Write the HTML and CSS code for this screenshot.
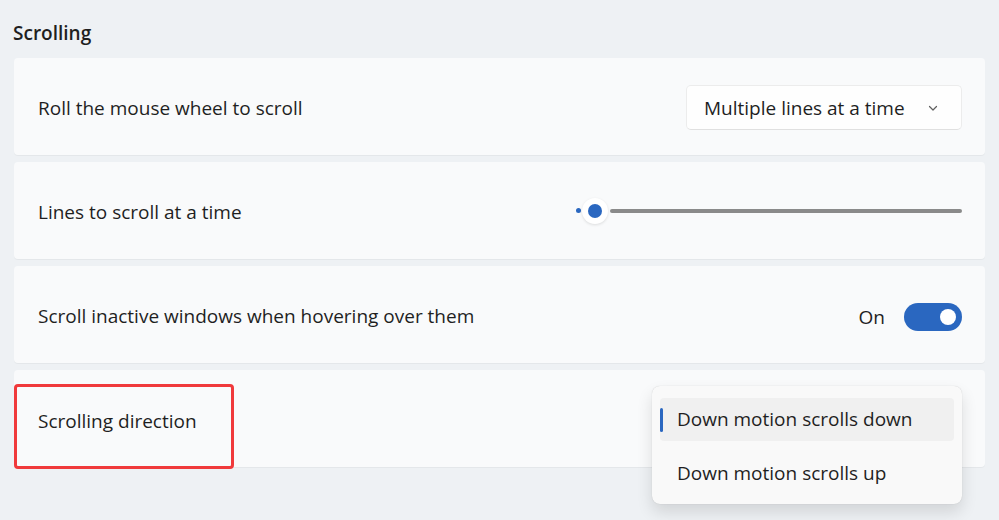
FILE: index.html
```html
<!DOCTYPE html>
<html lang="en">
<head>
  <meta charset="UTF-8" />
  <title>Mouse settings - Scrolling</title>
  <link rel="stylesheet" href="styles.css">
</head>
<body>

  <div class="page">
    <h2 class="section-title">Scrolling</h2>

    <!-- Roll the mouse wheel -->
    <div class="card">
      <span class="label">Roll the mouse wheel to scroll</span>
      <div class="combo">
        <span>Multiple lines at a time</span>
        <svg class="chevron" width="12" height="12" viewBox="0 0 12 12">
          <path d="M2.5 4.5 L6 8 L9.5 4.5" fill="none" stroke="#5f5f5f" stroke-width="1.2" stroke-linecap="round" stroke-linejoin="round"/>
        </svg>
      </div>
    </div>

    <!-- Lines to scroll -->
    <div class="card">
      <span class="label">Lines to scroll at a time</span>
      <div class="slider">
        <span class="slider-fill"></span>
        <span class="slider-thumb"><span class="slider-dot"></span></span>
        <span class="slider-track"></span>
      </div>
    </div>

    <!-- Inactive windows -->
    <div class="card">
      <span class="label">Scroll inactive windows when hovering over them</span>
      <div class="toggle-wrap">
        <span class="toggle-text">On</span>
        <span class="toggle"><span class="knob"></span></span>
      </div>
    </div>

    <!-- Scrolling direction -->
    <div class="card card-last">
      <span class="label">Scrolling direction</span>
      <div class="highlight"></div>
      <div class="menu">
        <div class="menu-item selected">Down motion scrolls down</div>
        <div class="menu-item">Down motion scrolls up</div>
      </div>
    </div>
  </div>

</body>
</html>
```

FILE: styles.css
```css
:root {
  --accent: #2a67c0;
  --page-bg: #eef1f4;
  --card-bg: #f9fafb;
  --text: #1f1f1f;
}

html, body {
  height: 100%;
}

body {
  margin: 0;
  padding: 0;
  min-height: 520px;
  background-color: var(--page-bg);
  font-family: 'Open Sans', 'Noto Sans', sans-serif;
  color: var(--text);
}

.page {
  padding: 19px 14px 60px 14px;
  width: 971px;
}

.section-title {
  margin: 0 0 11px -1px;
  font-size: 19px;
  font-weight: 600;
  line-height: 28px;
}

.card {
  position: relative;
  display: flex;
  align-items: center;
  justify-content: space-between;
  height: 97px;
  box-sizing: border-box;
  padding: 2px 23px 0 24px;
  margin-bottom: 7px;
  background-color: var(--card-bg);
  border-radius: 4px;
  box-shadow: 0 1px 0 rgba(0, 0, 0, 0.04);
}

.card-last {
  margin-top: 1px;
  padding-top: 5px;
}

.label {
  font-size: 19px;
}

/* dropdown button */
.combo {
  display: flex;
  align-items: center;
  justify-content: space-between;
  width: 276px;
  height: 45px;
  box-sizing: border-box;
  padding: 0 22px 0 17px;
  background: #fefefe;
  border: 1px solid #ececec;
  border-bottom-color: #e0e0e0;
  border-radius: 5px;
  font-size: 19px;
}

/* slider */
.slider {
  position: relative;
  display: flex;
  align-items: center;
  width: 388px;
  height: 30px;
  margin-top: -2px;
}

.slider-fill {
  width: 5px;
  height: 5px;
  margin-left: 2px;
  border-radius: 3px;
  background: var(--accent);
}

.slider-thumb {
  display: flex;
  align-items: center;
  justify-content: center;
  width: 26px;
  height: 26px;
  margin-left: 1px;
  border-radius: 50%;
  background: #ffffff;
  box-shadow: 0 1px 3px rgba(0, 0, 0, 0.12);
}

.slider-dot {
  width: 14px;
  height: 14px;
  border-radius: 50%;
  background: var(--accent);
}

.slider-track {
  flex: 1;
  height: 4px;
  margin-left: 2px;
  border-radius: 2px;
  background: #8a8a8a;
}

/* toggle */
.toggle-wrap {
  display: flex;
  align-items: center;
  gap: 19px;
  margin-top: 2px;
}

.toggle-text {
  font-size: 19px;
}

.toggle {
  display: flex;
  align-items: center;
  justify-content: flex-end;
  width: 58px;
  height: 28px;
  box-sizing: border-box;
  padding-right: 6px;
  border-radius: 14px;
  background: var(--accent);
}

.knob {
  width: 16px;
  height: 16px;
  border-radius: 50%;
  background: #ffffff;
}

/* red annotation box */
.highlight {
  position: absolute;
  left: 0;
  top: 14px;
  width: 220px;
  height: 85px;
  box-sizing: border-box;
  border: 3px solid #f0393b;
  border-radius: 4px;
}

/* open dropdown menu */
.menu {
  position: absolute;
  left: 638px;
  top: 16px;
  width: 310px;
  box-sizing: border-box;
  padding: 12px 8px 9px 8px;
  background: #f9f9f9;
  border-radius: 8px;
  box-shadow: 0 8px 16px rgba(0, 0, 0, 0.12), 0 0 1px rgba(0, 0, 0, 0.2);
}

.menu-item {
  position: relative;
  height: 43px;
  line-height: 43px;
  padding-left: 17px;
  margin-bottom: 11px;
  border-radius: 4px;
  font-size: 19px;
}

.menu-item:last-child {
  margin-bottom: 0;
}

.menu-item.selected {
  background: #f0f0f0;
}

.menu-item.selected::before {
  content: "";
  position: absolute;
  left: 0;
  top: 10px;
  width: 3px;
  height: 24px;
  border-radius: 2px;
  background: var(--accent);
}
```
